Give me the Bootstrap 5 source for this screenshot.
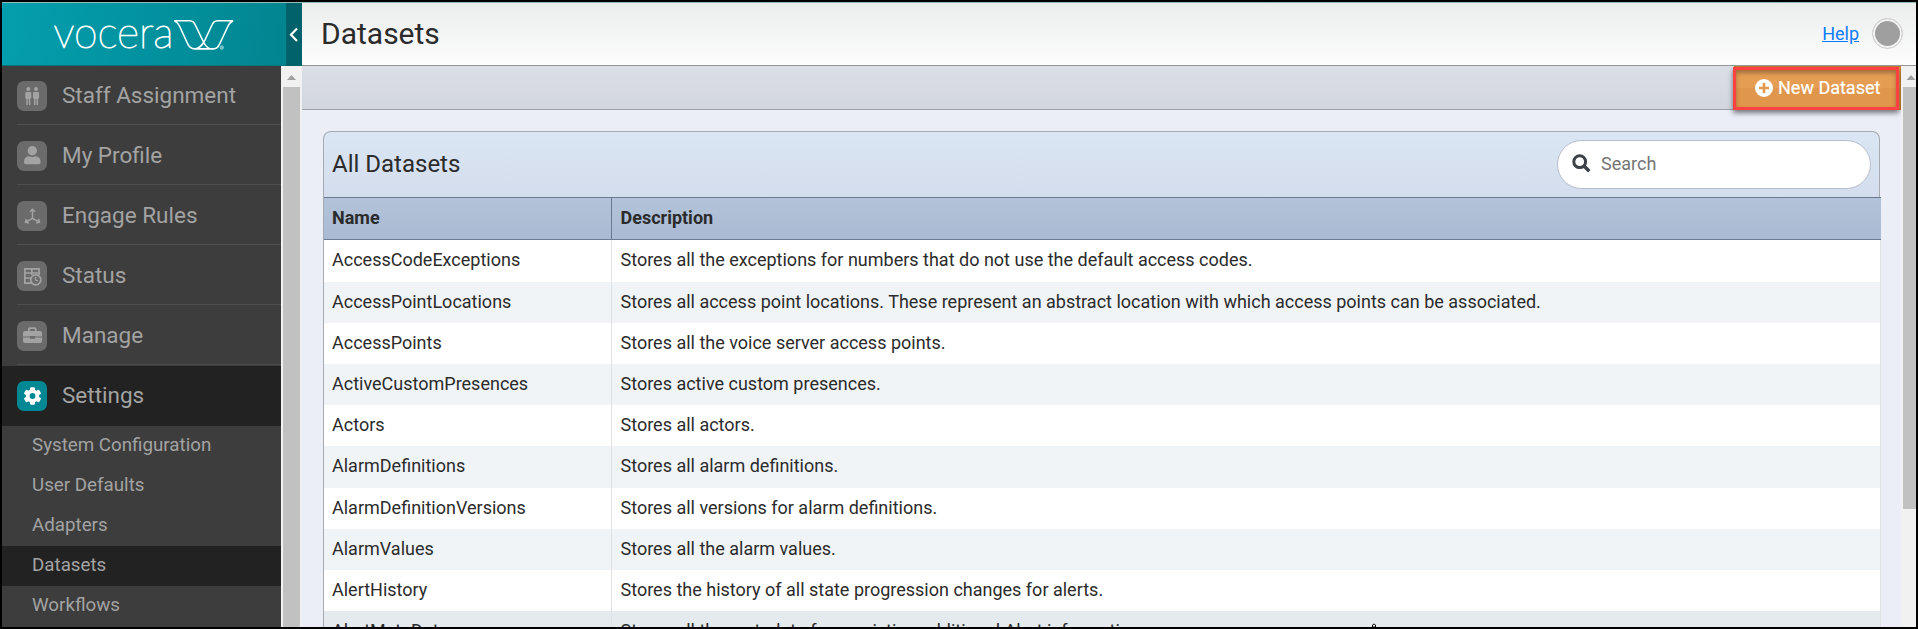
<!DOCTYPE html>
<html lang="en">
<head>
<meta charset="utf-8">
<title>Datasets</title>
<link rel="stylesheet" href="https://cdn.jsdelivr.net/npm/bootstrap@5.3.0/dist/css/bootstrap.min.css">
<style>
body{font-family:Roboto,"Liberation Sans",sans-serif;color:#2b2b2b;font-size:18px;line-height:1.5}
.app{height:629px;border:2px solid #000;background:#ebeef6}
.topline{height:1px;background:#8fbcb8;flex:none}
.topbar{height:63px;flex:none}
.brand{width:284px;background:linear-gradient(100deg,#049fae,#018590);border-bottom:1px solid #04737c;flex:none}
.fold{width:16px;background:#02626c;flex:none}
.titlebar{background:linear-gradient(#ebecec,#fdfdfd);border-bottom:1px solid #949698;padding:0 13px 0 19px}
.titlebar h1{font-size:30px;font-weight:400;line-height:61px;margin:0}
.titlebar a{color:#0a7cff;margin-bottom:1px}
.avatar{width:31px;height:31px;border:1px solid #d4d4d4;border-radius:50%;background:#9f9f9f;box-shadow:inset 0 0 0 2px #f4f4f4;margin-left:13px;margin-bottom:1px}
.side{width:279px;background:#3d3d3d;color:#a3a3a3;flex:none}
.side a{color:inherit;text-decoration:none}
.side-item{height:60px;padding-left:15px;font-size:22.5px;display:block}
.side-item .inner{height:59px;border-bottom:1px solid #4e4e4e;gap:15px;line-height:57px}
.side-item.on{background:#222}
.side-item.on .inner{border-color:transparent}
.tile{width:30px;height:30px;border-radius:7px;background:#6b6b6b;color:#a3a3a3;flex:none;margin-top:1px}
.on .tile{background:#018894;color:#fff}
.tile svg{display:block}
.side-sub{height:40px;line-height:39px;padding-left:30px;font-size:18.75px;display:block}
.side-sub.on{background:#222}
.scroller{background:#f1f1f1;flex:none}
.scroller svg{display:block;height:21px}
.scroller .thumb{background:#c1c1c1;margin-left:2px}
.tools{height:44px;background:linear-gradient(#dbdee6,#d2d6de);border-bottom:1px solid #9da0a6;flex:none}
.btn-new{width:167px;height:44px;border-radius:0;border:1px solid #c98132;background:linear-gradient(#e59d54 50%,#e0964b 50%);position:relative;color:#fff;font-size:18px;font-weight:400;-webkit-text-stroke:.2px #fff;padding:0 0 1px 20px;gap:5px}
.btn-new::after{content:"";position:absolute;left:-2px;top:0;width:166px;height:43px;border:3px solid #ff4141;box-shadow:0 3px 5px rgba(0,0,0,.5),inset 0 3px 4px rgba(0,0,0,.3)}
.panel{margin:21px 0 0 21px;border:1px solid #a6abb1;border-bottom:0;border-radius:8px 8px 0 0;background:linear-gradient(#dbe6f4,#d3dded 66px,#fff 66px);width:1557px}
.panel-head{height:65px;padding:0 8px}
.panel-head h2{font-size:24px;margin:0;font-weight:400}
.finder{width:314px;height:49px;border:1px solid #b4bdcb;border-radius:25px;background:#fff;color:#757575;padding:0 0 2px 14px;gap:10px}
.grid{--bs-table-bg:transparent;table-layout:fixed;color:#2b2b2b;margin:0;border-collapse:separate;border-spacing:0;width:1557px}
.grid>thead>tr>th{height:43px;border:solid #6b7a90;border-width:1px 0;padding:0 8px 2px;background:linear-gradient(#b2c3d9,#aabad3);font-weight:700;vertical-align:middle;line-height:27px}
.grid>tbody>tr>td{height:41px;padding:0 8px 2px;border:0;border-right:1px solid #dfe2e5;background:#fff;line-height:27px;vertical-align:middle}
.grid>tbody>tr:nth-child(5n+1)>td{height:42px;padding-bottom:3px}
.grid>tbody>tr:nth-child(even)>td{background:#f0f4f7}
.grid>tbody>tr:last-child>td{background:#e4eaed}
.grid>thead>tr>th:first-child{border-right:1px solid #6b7a90;width:288px}
.grid>*>tr>*:last-child{padding-left:8.5px}
.pointer{position:absolute;left:1371px;top:623px}
</style>
</head>
<body>
<div class="app d-flex flex-column overflow-hidden">
  <div class="topline"></div>
  <header class="topbar d-flex">
    <div class="brand">
      <svg class="d-block" width="284" height="62" viewBox="2 3 284 62" fill="none" stroke="#fff" role="img" aria-label="vocera">
        <text x="53.5" y="48" textLength="120" lengthAdjust="spacingAndGlyphs" font-family="Lato" font-weight="100" font-size="44" fill="#fff" stroke-width="1">vocera</text>
        <path stroke-width="1.6" d="M174.3 20.8H190Q193.6 21 195.3 25L203.5 42Q206 47 209.5 48.5M174.3 20.8Q178 22.500 179.500 26L187.300 43Q189.500 48.700 195 48.900H213.500Q217.500 48.700 219.600 44L227.600 27Q229.500 22.500 233 20.800H217.500Q213.600 21 212 25L204.500 41Q201 47.500 196 48.700"/>
        <circle cx="221.800" cy="47.500" r="1.700" stroke="#8fd0d6" stroke-width=".8" fill="#6cbcc4"/>
      </svg>
    </div>
    <div class="fold d-flex align-items-center justify-content-center"><svg width="12" height="16" viewBox="0 0 12 16" fill="none" stroke="#fff" stroke-width="2.200"><path d="M9 1.500 3 7.700l6 6.200"/></svg></div>
    <div class="titlebar flex-fill d-flex justify-content-between">
      <h1>Datasets</h1>
      <div class="d-flex align-items-center"><a href="#">Help</a><span class="avatar"></span></div>
    </div>
  </header>
  <div class="d-flex flex-fill overflow-hidden">
    <nav class="side">
      <a class="side-item" href="#"><span class="inner d-flex align-items-center"><span class="tile"><svg width="30" height="30" fill="currentColor"><circle cx="11.300" cy="8" r="2"/><circle cx="19" cy="8" r="2"/><path d="M9.300 11h4q1 0 1 1v5.500h-1V24H11.800v-6h-1v6H9.300v-6.500h-1V12q0-1 1-1zM17 11h4q1 0 1 1v5.500h-1V24h-1.500v-6h-1v6H17v-6.500h-1V12q0-1 1-1z"/></svg></span>Staff Assignment</span></a>
      <a class="side-item" href="#"><span class="inner d-flex align-items-center"><span class="tile"><svg width="30" height="30" fill="currentColor"><circle cx="15.300" cy="9.800" r="4.700"/><path d="M7 21.500q0-6 5-6.200 3.300 1.200 6.600 0 5 .2 5 6.200 0 1.700-1.600 1.700H8.600Q7 23.200 7 21.500z"/></svg></span>My Profile</span></a>
      <a class="side-item" href="#"><span class="inner d-flex align-items-center"><span class="tile"><svg width="30" height="30" fill="none" stroke="currentColor" stroke-width="1.500"><path d="M15.500 9v8.500M15.500 17.300 9 21M15.500 17.300 22 21M13 10.800l2.500-2.500 2.500 2.500M9.300 18 8.500 21.300l3.300.8M21.700 18l.8 3.300-3.300.8"/></svg></span>Engage Rules</span></a>
      <a class="side-item" href="#"><span class="inner d-flex align-items-center"><span class="tile"><svg width="30" height="30" fill="none" stroke="currentColor" stroke-width="1.700"><path d="M15 22.200H7.800V7.800H22V14M7.800 12H22M7.800 17H14M14.800 7.800V14"/><circle cx="18.800" cy="18.800" r="5" fill="#6b6b6b"/><path stroke-width="1.300" d="M18.500 16v3l2.500 1"/></svg></span>Status</span></a>
      <a class="side-item" href="#"><span class="inner d-flex align-items-center"><span class="tile"><svg width="30" height="30" fill="currentColor"><path fill-rule="evenodd" d="M11 10V8q0-1.800 1.800-1.800h5Q19.600 6.200 19.600 8v2H23q2 0 2 2v3.500H18V15h-5v.500H6V12q0-2 2-2zM12.800 10h5V8h-5z"/><path d="M6 16.500h7v1.300h5v-1.300h7V20q0 2-2 2H8q-2 0-2-2z"/></svg></span>Manage</span></a>
      <a class="side-item on" href="#"><span class="inner d-flex align-items-center"><span class="tile"><svg width="30" height="30"><g fill="#fff"><circle cx="15.500" cy="15" r="6.700"/><rect x="13" y="6.200" width="5" height="17.600" rx="1.200"/><rect x="13" y="6.200" width="5" height="17.600" rx="1.200" transform="rotate(60 15.500 15)"/><rect x="13" y="6.200" width="5" height="17.600" rx="1.200" transform="rotate(120 15.500 15)"/></g><circle cx="15.500" cy="15" r="2.900" fill="#018894"/></svg></span>Settings</span></a>
      <a class="side-sub" href="#">System Configuration</a>
      <a class="side-sub" href="#">User Defaults</a>
      <a class="side-sub" href="#">Adapters</a>
      <a class="side-sub on" href="#">Datasets</a>
      <a class="side-sub" href="#">Workflows</a>
    </nav>
    <div class="scroller d-flex flex-column" style="width:21px"><svg width="21" height="21" fill="#a0a0a0"><path d="M6 14l4.500-5 4.500 5z"/></svg><div class="thumb flex-fill" style="width:17px"></div></div>
    <main class="flex-fill d-flex flex-column overflow-hidden">
      <div class="tools d-flex justify-content-end">
        <button class="btn btn-new d-flex align-items-center" type="button"><svg width="18" height="18"><circle cx="9" cy="9" r="9" fill="#fff"/><path d="M9 4v10M4 9h10" stroke="#e29a50" stroke-width="2.600"/></svg><span>New Dataset</span></button>
      </div>
      <section class="panel">
        <div class="panel-head d-flex align-items-center justify-content-between">
          <h2>All Datasets</h2>
          <div class="finder d-flex align-items-center"><svg width="19" height="19" fill="none" stroke="#3d4248"><circle cx="7.700" cy="7.700" r="5.900" stroke-width="3"/><path d="M12 12l5.300 5.300" stroke-width="3.400"/></svg><span>Search</span></div>
        </div>
        <table class="table grid">
          <thead><tr><th>Name</th><th>Description</th></tr></thead>
          <tbody>
            <tr><td>AccessCodeExceptions</td><td>Stores all the exceptions for numbers that do not use the default access codes.</td></tr>
            <tr><td>AccessPointLocations</td><td>Stores all access point locations. These represent an abstract location with which access points can be associated.</td></tr>
            <tr><td>AccessPoints</td><td>Stores all the voice server access points.</td></tr>
            <tr><td>ActiveCustomPresences</td><td>Stores active custom presences.</td></tr>
            <tr><td>Actors</td><td>Stores all actors.</td></tr>
            <tr><td>AlarmDefinitions</td><td>Stores all alarm definitions.</td></tr>
            <tr><td>AlarmDefinitionVersions</td><td>Stores all versions for alarm definitions.</td></tr>
            <tr><td>AlarmValues</td><td>Stores all the alarm values.</td></tr>
            <tr><td>AlertHistory</td><td>Stores the history of all state progression changes for alerts.</td></tr>
            <tr><td>AlertMetaData</td><td>Stores all the metadata for persisting additional Alert information.</td></tr>
          </tbody>
        </table>
      </section>
    </main>
    <div class="scroller" style="width:15px"><svg width="15" height="21" fill="#a0a0a0"><path d="M5.500 14l4.500-5 4.500 5z"/></svg><div class="thumb" style="height:422px"></div></div>
  </div>
</div>
<svg class="pointer" width="6" height="4"><path d="M1.500 4V2q1.500-2 3 0v2z" fill="#fff" stroke="#000"/></svg>
<script src="https://cdn.jsdelivr.net/npm/bootstrap@5.3.0/dist/js/bootstrap.bundle.min.js"></script>
</body>
</html>
